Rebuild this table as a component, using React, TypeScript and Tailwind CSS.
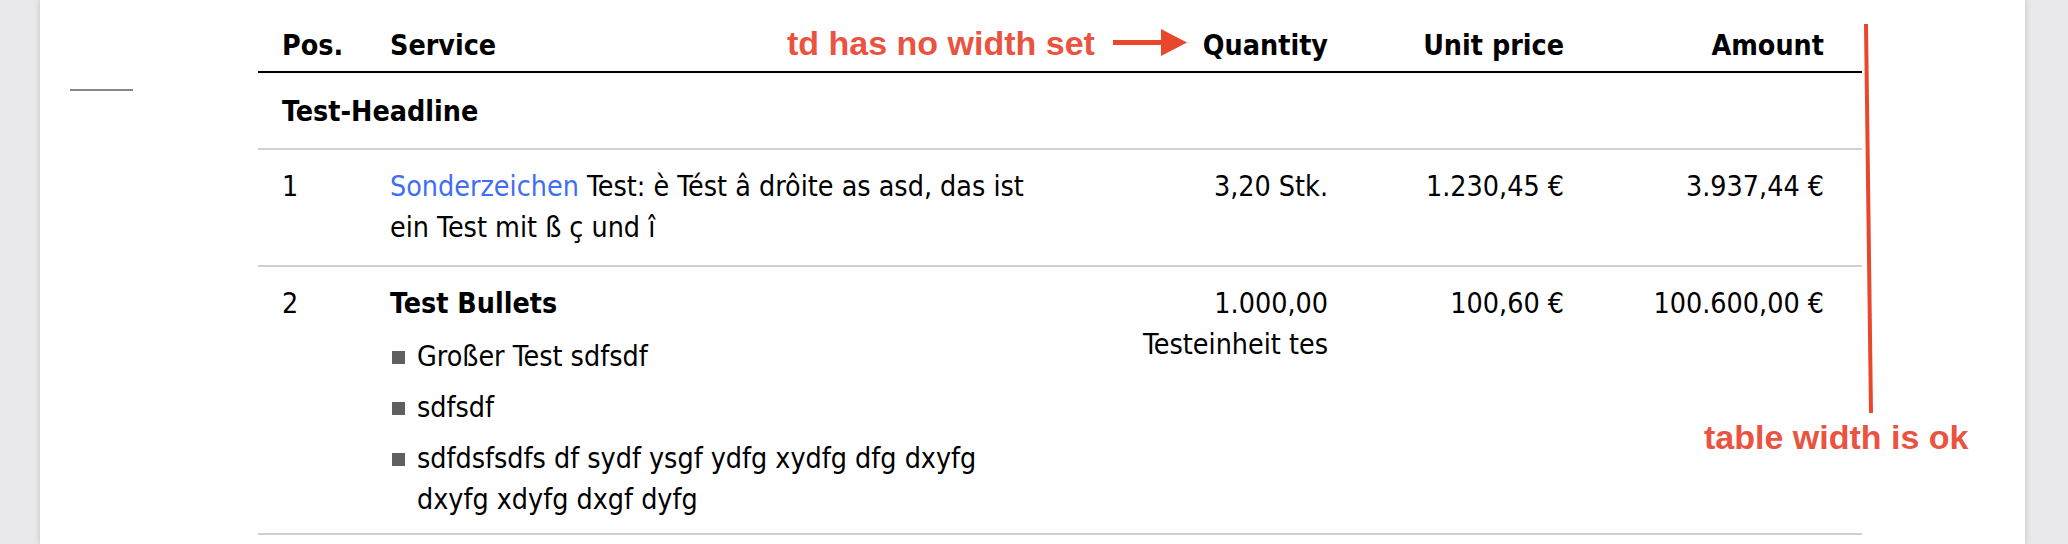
import React from "react";

// invoice line items table with two review notes drawn on top

const bullets = [
  "Großer Test sdfsdf",
  "sdfsdf",
  "sdfdsfsdfs df sydf ysgf ydfg xydfg dfg dxyfg dxyfg xdyfg dxgf dyfg",
];

const Note = ({ className, children }: { className: string; children: React.ReactNode }) => (
  <div
    className={`absolute font-['Liberation_Sans',Arial,sans-serif] font-bold text-[34px] leading-[34px] text-[#ea5340] whitespace-nowrap ${className}`}
  >
    {children}
  </div>
);

export default function App() {
  return (
    <div className="w-full h-[544px] bg-[#e9e9eb] overflow-hidden flex">
      <div className="relative ml-[40px] w-[1985px] h-full bg-white shadow-[0_0_6px_rgba(0,0,0,0.18)] flex font-['DejaVu_Sans_Condensed','DejaVu_Sans',sans-serif] [font-stretch:condensed] text-[28.4px] leading-[41px] text-black">
        {/* fold mark */}
        <div className="w-[218px] shrink-0">
          <div className="mt-[89px] ml-[30px] w-[63px] h-[2px] bg-[#878787]" />
        </div>

        <table className="table-fixed border-collapse w-[1604px] mt-[6px] self-start">
          <colgroup>
            <col className="w-[108px]" />
            <col className="w-[695px]" />
            <col className="w-[305px]" />
            <col className="w-[236px]" />
            <col className="w-[260px]" />
          </colgroup>
          <thead>
            <tr className="border-b-2 border-black">
              <th className="pl-6 pr-6 pt-[19px] pb-[5px] text-left font-bold">Pos.</th>
              <th className="pl-6 pr-6 pt-[19px] pb-[5px] text-left font-bold">Service</th>
              <th className="pl-6 pr-[38px] pt-[19px] pb-[5px] text-right font-bold">Quantity</th>
              <th className="pl-6 pr-[38px] pt-[19px] pb-[5px] text-right font-bold">Unit price</th>
              <th className="pl-6 pr-[38px] pt-[19px] pb-[5px] text-right font-bold">Amount</th>
            </tr>
          </thead>
          <tbody>
            <tr className="border-b-2 border-[#d0d0d0]">
              <td colSpan={5} className="pl-6 pt-[18px] pb-4 font-bold">
                Test-Headline
              </td>
            </tr>
            <tr className="border-b-2 border-[#d0d0d0] align-top">
              <td className="pl-6 pr-6 pt-4 pb-[17px]">1</td>
              <td className="pl-6 pr-6 pt-4 pb-[17px]">
                <span className="text-[#3f6ef4]">Sonderzeichen</span> Test: è Tést â drôite as asd, das ist ein Test
                mit ß ç und î
              </td>
              <td className="pl-6 pr-[38px] pt-4 pb-[17px] text-right">3,20 Stk.</td>
              <td className="pl-6 pr-[38px] pt-4 pb-[17px] text-right">1.230,45 €</td>
              <td className="pl-6 pr-[38px] pt-4 pb-[17px] text-right">3.937,44 €</td>
            </tr>
            <tr className="border-b-2 border-[#d0d0d0] align-top">
              <td className="pl-6 pr-6 pt-4 pb-[13px]">2</td>
              <td className="pl-6 pr-6 pt-4 pb-[13px]">
                <div className="font-bold">Test Bullets</div>
                <ul className="mt-3 flex flex-col gap-[10px]">
                  {bullets.map((b, i) => (
                    <li key={i} className="flex items-start">
                      <span className="ml-[2px] mt-[15px] mr-3 w-[13px] h-[13px] shrink-0 bg-[#5f5f5f]" />
                      <span>{b}</span>
                    </li>
                  ))}
                </ul>
              </td>
              <td className="pl-6 pr-[38px] pt-4 pb-[13px] text-right">
                <div>1.000,00</div>
                <div>Testeinheit tes</div>
              </td>
              <td className="pl-6 pr-[38px] pt-4 pb-[13px] text-right">100,60 €</td>
              <td className="pl-6 pr-[38px] pt-4 pb-[13px] text-right">100.600,00 €</td>
            </tr>
          </tbody>
        </table>

        {/* review notes */}
        <Note className="left-[747px] top-[26px]">td has no width set</Note>
        <svg className="absolute left-[1073px] top-[28px]" width="75" height="30" viewBox="0 0 75 30">
          <rect x="0" y="12" width="50" height="5" fill="#e8472c" />
          <polygon points="48,1 74,14.5 48,28" fill="#e8472c" />
        </svg>
        <svg className="absolute left-[1820px] top-[20px]" width="20" height="400" viewBox="0 0 20 400">
          <line x1="6" y1="4" x2="11" y2="393" stroke="#e8472c" strokeWidth="4" />
        </svg>
        <Note className="left-[1664px] top-[420px]">table width is ok</Note>
      </div>
    </div>
  );
}
